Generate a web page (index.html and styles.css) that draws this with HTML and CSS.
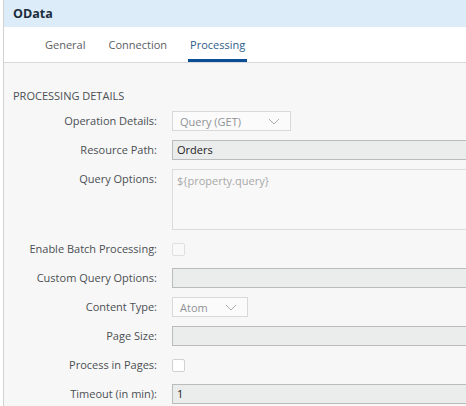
FILE: index.html
```html
<!DOCTYPE html>
<html lang="en">
<head>
  <meta charset="UTF-8">
  <title>OData</title>
  <link rel="stylesheet" href="styles.css">
</head>
<body>
  <div class="panel">
    <div class="title">OData</div>

    <div class="tabs">
      <span class="tab">General</span>
      <span class="tab">Connection</span>
      <span class="tab active">Processing</span>
    </div>

    <div class="content">
      <h3>Processing Details</h3>

      <div class="form">
        <label>Operation Details:</label>
        <div class="select wide">
          <span>Query (GET)</span>
          <svg width="12" height="7" viewBox="0 0 12 7"><path d="M1 1l5 5 5-5" fill="none" stroke="#a9abad" stroke-width="1"/></svg>
        </div>

        <label>Resource Path:</label>
        <div class="input">Orders</div>

        <label class="top">Query Options:</label>
        <div class="textarea">${property.query}</div>

        <label>Enable Batch Processing:</label>
        <div><span class="check faded"></span></div>

        <label>Custom Query Options:</label>
        <div class="input"></div>

        <label>Content Type:</label>
        <div class="select">
          <span>Atom</span>
          <svg width="12" height="7" viewBox="0 0 12 7"><path d="M1 1l5 5 5-5" fill="none" stroke="#a9abad" stroke-width="1"/></svg>
        </div>

        <label>Page Size:</label>
        <div class="input"></div>

        <label>Process in Pages:</label>
        <div><span class="check"></span></div>

        <label>Timeout (in min):</label>
        <div class="input">1</div>
      </div>
    </div>
  </div>
</body>
</html>
```

FILE: styles.css
```css
body {
  margin: 0;
  background-color: #ffffff;
  font-family: "Open Sans", "Noto Sans", sans-serif;
  overflow: hidden;
}

.panel {
  margin-left: 3px;
  border-left: 1px solid #d2d2d2;
  height: 406px;
  background-color: #f7f7f7;
}

.title {
  height: 27px;
  line-height: 28px;
  padding-left: 9px;
  background-color: #dcecf9;
  font-size: 12.5px;
  font-weight: bold;
  color: #1d2d3e;
}

.tabs {
  display: flex;
  height: 35px;
  padding-left: 39px;
  gap: 19px;
  background-color: #ffffff;
  border-bottom: 1px solid #d9d9d9;
}
.tab {
  font-size: 11px;
  color: #5a5e62;
  line-height: 35px;
  padding: 0 2px;
}
.tab.active {
  color: #2f5d8c;
  box-shadow: inset 0 -3px 0 #0c4e96;
}

.content {
  padding-top: 25px;
}

h3 {
  margin: 0 0 7px 9px;
  font-size: 11px;
  font-weight: normal;
  text-transform: uppercase;
  color: #4b4f53;
  line-height: 16px;
}

.form {
  display: grid;
  grid-template-columns: 153px 1fr;
  column-gap: 15px;
  row-gap: 9px;
  align-items: center;
}
.form label {
  text-align: right;
  font-size: 11px;
  color: #4b4f53;
  line-height: 20px;
}
.form label.top {
  align-self: start;
}

.input {
  width: 320px;
  height: 18px;
  line-height: 18px;
  padding-left: 4px;
  background-color: #ebecec;
  border: 1px solid #b9bbbd;
  font-size: 11px;
  color: #222222;
}

.textarea {
  width: 320px;
  height: 53px;
  padding: 3px 4px;
  background-color: #f8f8f8;
  border: 1px solid #dcdcdc;
  font-size: 11px;
  color: #a8a8a8;
}

.select {
  display: flex;
  align-items: center;
  justify-content: space-between;
  width: 57px;
  height: 18px;
  padding: 0 10px 0 7px;
  background-color: #fbfbfb;
  border: 1px solid #d9d9d9;
  font-size: 11px;
  color: #8f9294;
}
.select.wide {
  width: 100px;
}

.check {
  display: block;
  width: 11px;
  height: 11px;
  border: 1px solid #cfd1d3;
  border-radius: 2px;
  background-color: #ffffff;
}
.check.faded {
  border-color: #e0e0e0;
  background-color: #f9f9f9;
}
```
